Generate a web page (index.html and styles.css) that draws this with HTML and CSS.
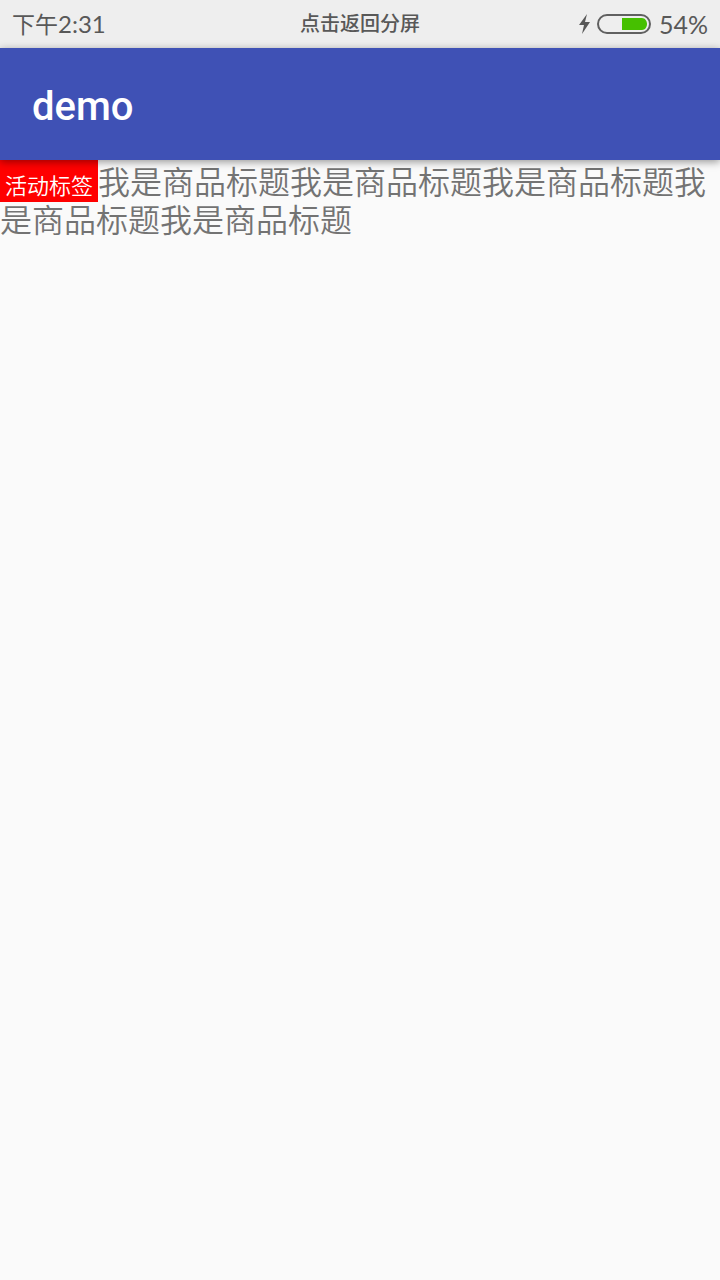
FILE: index.html
```html
<!DOCTYPE html>
<html lang="zh-CN">
<head>
<meta charset="UTF-8">
<meta name="viewport" content="width=device-width, initial-scale=1">
<title>demo</title>
<link rel="stylesheet" href="styles.css">
</head>
<body>
  <div class="status-bar">
    <div class="time"><span class="period">下午</span>2:31</div>
    <span class="notice">点击返回分屏</span>
    <div class="power">
      <svg class="bolt" viewBox="0 0 12 20" width="12" height="20">
        <path d="M8 0 L0 11 H5 L3 20 L11 8 H6 Z" fill="#585858"/>
      </svg>
      <svg class="battery" viewBox="0 0 54 20" width="54" height="20">
        <rect x="1" y="1" width="52" height="18" rx="9" fill="none" stroke="#606060" stroke-width="2"/>
        <path d="M25 4 H45 C48 4 50 7 50 10 C50 13 48 16 45 16 H25 Z" fill="#46c000"/>
      </svg>
      <span class="percent">54%</span>
    </div>
  </div>
  <header class="toolbar">
    <h1>demo</h1>
  </header>
  <main>
    <p class="goods-title"><span class="tag">活动标签</span>我是商品标题我是商品标题我是商品标题我是商品标题我是商品标题</p>
  </main>
</body>
</html>
```
FILE: styles.css
```css
body {
  margin: 0;
  background-color: #fafafa;
  font-family: Roboto, "Noto Sans CJK SC", sans-serif;
}

.status-bar {
  display: grid;
  grid-template-columns: 1fr auto 1fr;
  align-items: center;
  height: 48px;
  padding: 0 12px;
  background-color: #eeeeee;
  color: #585858;
}

.time {
  font-family: Lato, "Noto Sans CJK SC", sans-serif;
  font-size: 24px;
  line-height: 32px;
}

.period {
  font-size: 23px;
}

.notice {
  font-size: 20px;
  font-weight: 500;
  line-height: 32px;
}

.power {
  display: flex;
  align-items: center;
  justify-content: flex-end;
}

.bolt {
  margin-right: 6px;
}

.battery {
  margin-right: 8px;
}

.percent {
  font-family: Lato, "Noto Sans CJK SC", sans-serif;
  font-size: 25px;
}

.toolbar {
  position: relative;
  display: flex;
  align-items: center;
  height: 108px;
  padding: 4px 32px 0;
  background-color: #3f51b5;
  color: #ffffff;
  box-shadow: 0 2px 8px rgba(0, 0, 0, 0.4);
}

.toolbar h1 {
  margin: 0;
  font-size: 40px;
  font-weight: 500;
}

.goods-title {
  margin: 0;
  color: #737373;
  font-size: 32px;
  font-weight: 350;
  line-height: 38px;
}

.tag {
  display: inline-block;
  padding: 12px 5px 0;
  background-color: #ff0000;
  color: #ffffff;
  font-size: 22px;
  line-height: 30px;
}
```
